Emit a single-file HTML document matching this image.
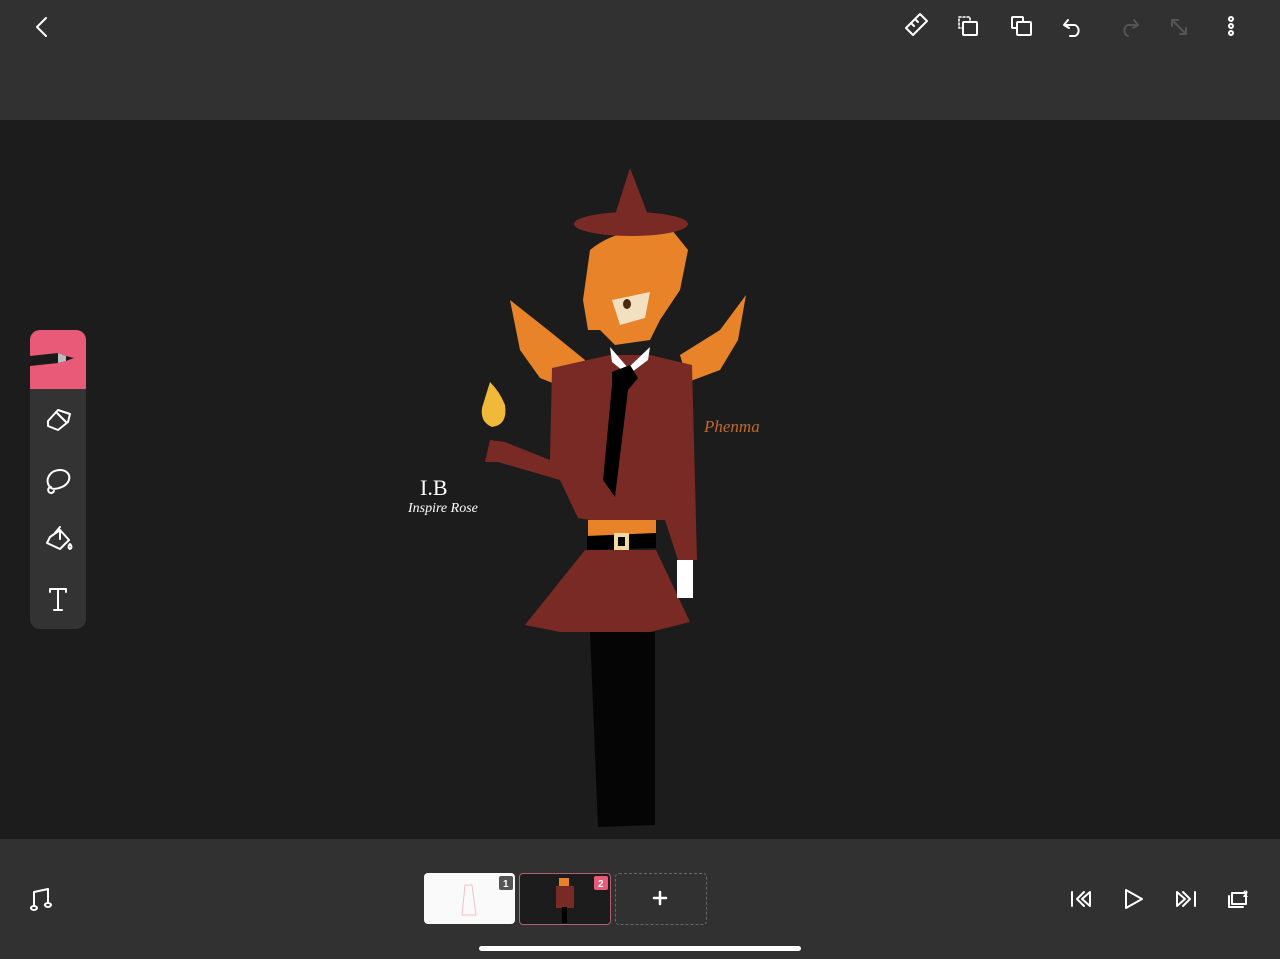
<!DOCTYPE html>
<html><head><meta charset="utf-8"><style>
body{margin:0;width:1280px;height:959px;background:#1c1c1c;overflow:hidden;font-family:"Liberation Sans",sans-serif;position:relative}
.top{position:absolute;left:0;top:0;width:1280px;height:120px;background:#313131}
.bot{position:absolute;left:0;top:839px;width:1280px;height:120px;background:#313131}
svg{position:absolute;left:0;top:0}
.tools{position:absolute;left:30px;top:330px;width:56px;height:299px;background:#333;border-radius:10px;overflow:hidden}
.tools .pen{height:59px;background:#e85a78}
.th{position:absolute;top:873px;height:50px;width:90px;border-radius:4px;box-sizing:border-box}
</style></head><body>
<div class="top"></div>
<div class="bot"></div>
<div class="tools"><div class="pen"></div></div>
<div class="th" style="left:424px;background:#fafafa;width:91px;height:51px"></div>
<div class="th" style="left:519px;background:#1c1c1c;border:1px solid #b06070;width:92px;height:52px"></div>
<div class="th" style="left:615px;border:1px dashed #666;width:92px;height:52px"></div>
<svg width="1280" height="959" viewBox="0 0 1280 959">
<g fill="none" stroke="#fff" stroke-width="2" stroke-linecap="round" stroke-linejoin="round">
<path d="M46 18 L37 27 L46 36"/>
<path d="M906 28 L920 14 L927 21 L913 35 Z M911 23 l3 3 M915 19 l3 3"/>
<rect x="959" y="17" width="11" height="11" stroke-dasharray="2 2" stroke-width="1.6"/>
<rect x="963" y="22" width="14" height="13" rx="1" fill="#313131"/>
<rect x="1012" y="17" width="11" height="11" rx="1"/>
<rect x="1017" y="22" width="14" height="13" rx="1" fill="#313131"/>
<path d="M1068 20 L1064 25 L1069 28 M1064 25 H1075 A6 6 0 0 1 1075 36 H1070"/>
<path stroke="#555" d="M1134 20 L1138 25 L1133 28 M1138 25 H1128 A6 6 0 0 0 1128 36"/>
<path stroke="#555" d="M1172 20 L1186 34 M1172 20 h6 M1172 20 v6 M1186 34 h-6 M1186 34 v-6"/>
<circle cx="1231" cy="19" r="2"/><circle cx="1231" cy="26" r="2"/><circle cx="1231" cy="33" r="2"/>
<path d="M48 421 L58 410 L70 414 L68 422 L58 430 L48 426 Z M56 412 L66 422"/>
<path d="M50 487 C44 480 50 470 60 470 C70 470 73 480 64 486 C58 489 52 490 50 487 Z M51 487 a3 3 0 1 0 3 4"/>
<path d="M50 537 L60 530 L69 540 L60 549 L47 543 Z M55 533 L60 527 M60 530 V539 M70 544 c-2 2 -2 4 0 5 c2 -1 2 -3 0 -5"/>
<path d="M50 589 H66 M58 589 V610 M54 610 H62 M50 589 v3 M66 589 v3"/>
<path d="M34 906 V892 L48 889 V903 M34 906 a3 2 0 1 1 -0.1 0 M48 903 a3 2 0 1 1 -0.1 0"/>
<path d="M1072 892 V906 M1090 892 L1082 899 L1090 906 Z M1084 892 L1077 899 L1084 906"/>
<path d="M1126 890 V908 L1142 899 Z"/>
<path d="M1195 892 V906 M1177 892 L1185 899 L1177 906 Z M1183 892 L1190 899 L1183 906"/>
<path d="M1229 896 V907 H1243 M1232 893 V904 H1246 V893 Z"/>
<path stroke-width="2.5" d="M654 898 H666 M660 892 V904"/>
</g>
<text x="1243" y="897" fill="#fff" font-size="9" font-weight="bold">2</text>
<path d="M30 356 L58 353 L66 356 L74 358 L66 361 L58 363 L30 366 Z" fill="#1a1a1a"/>
<path d="M58 353 L66 356 L66 361 L58 363 Z" fill="#bbb"/>
<rect x="499" y="876" width="14" height="14" rx="2" fill="#555"/><text x="503" y="887" fill="#fff" font-size="10" font-weight="bold">1</text>
<rect x="594" y="876" width="14" height="14" rx="2" fill="#e85a78"/><text x="598" y="887" fill="#fff" font-size="10" font-weight="bold">2</text>
<rect x="479" y="946" width="322" height="5" rx="2.5" fill="#fff"/>
<path d="M465 885 L472 885 L476 915 L462 915 Z" fill="none" stroke="#e9a" stroke-width="1" opacity="0.6"/>
<rect x="556" y="886" width="18" height="22" fill="#7a2a24"/><rect x="562" y="907" width="5" height="16" fill="#000"/><rect x="559" y="878" width="10" height="8" fill="#e8832a"/>
<path d="M510 300 L548 330 L585 360 L575 392 L540 378 L520 350 Z" fill="#e8832a"/>
<path d="M746 295 L720 330 L680 355 L688 382 L720 370 L738 340 Z" fill="#e8832a"/>
<path d="M590 250 Q620 225 672 230 L688 250 L680 290 L660 320 L650 340 L615 345 L600 330 L588 330 L583 300 Z" fill="#e8832a"/>
<path d="M612 300 L650 292 L645 318 L620 325 Z" fill="#f3e0c0"/>
<ellipse cx="627" cy="304" rx="4" ry="5" fill="#4a2a10"/>
<path d="M630 168 L648 215 L615 215 Z" fill="#7a2a24"/>
<ellipse cx="631" cy="224" rx="57" ry="12" fill="#7a2a24"/>
<path d="M552 368 L610 355 L650 355 L692 365 L697 560 L678 560 L665 520 L590 520 L578 518 L560 480 L498 462 L485 462 L490 440 L505 442 L550 460 Z" fill="#7a2a24"/>
<path d="M585 550 L656 550 L690 622 L650 632 L560 632 L525 625 Z" fill="#7a2a24"/>
<rect x="588" y="520" width="68" height="16" fill="#e8832a"/>
<path d="M587 536 L656 533 L656 548 L587 550 Z" fill="#000"/>
<rect x="614" y="533" width="15" height="17" fill="#f0d8a0"/><rect x="618" y="537" width="7" height="9" fill="#000"/>
<path d="M590 632 L655 632 L655 825 L598 827 Z" fill="#050505"/>
<rect x="677" y="560" width="16" height="38" fill="#fff"/>
<path d="M610 347 L628 368 L650 347 L648 360 L628 375 L612 362 Z" fill="#fff"/>
<path d="M612 372 L630 365 L638 378 L628 390 L615 497 L603 480 L612 385 Z" fill="#000"/>
<path d="M490 382 Q500 392 505 405 Q508 425 492 427 Q480 422 482 408 Q485 398 490 382 Z" fill="#f0b93a"/>
<text x="704" y="432" fill="#c06a30" font-size="17" font-family="Liberation Serif,serif" font-style="italic">Phenma</text>
<text x="420" y="495" fill="#fff" font-size="22" font-family="Liberation Serif,serif">I.B</text>
<text x="408" y="512" fill="#fff" font-size="14" font-family="Liberation Serif,serif" font-style="italic">Inspire Rose</text>
</svg>
</body></html>
